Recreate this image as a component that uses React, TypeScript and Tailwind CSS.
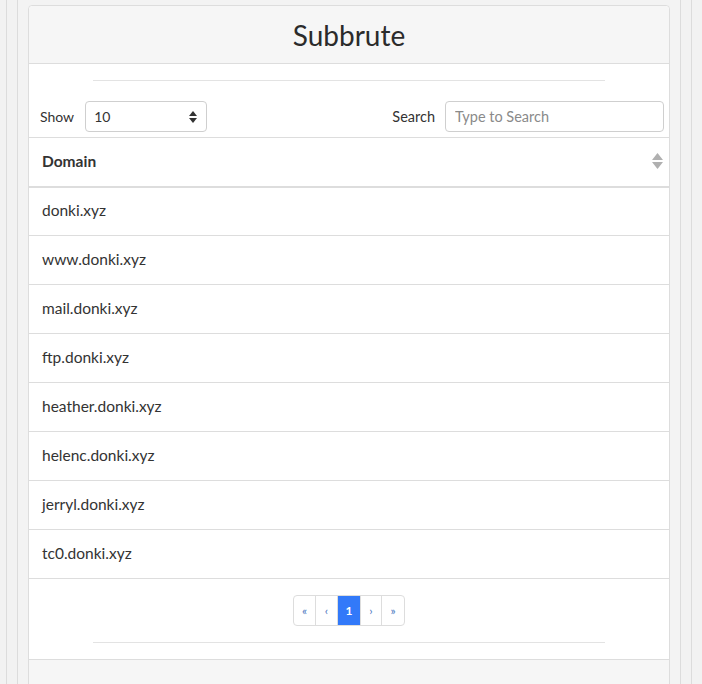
const domains = [
  "donki.xyz",
  "www.donki.xyz",
  "mail.donki.xyz",
  "ftp.donki.xyz",
  "heather.donki.xyz",
  "helenc.donki.xyz",
  "jerryl.donki.xyz",
  "tc0.donki.xyz",
];

function SortIcon() {
  return (
    <svg width="11" height="16" viewBox="0 0 11 16" className="text-[#b0b0b0]">
      <path d="M5.5 0 L11 7 L0 7 Z" fill="currentColor" />
      <path d="M0 9 L11 9 L5.5 16 Z" fill="currentColor" />
    </svg>
  );
}

export default function App() {
  return (
    <div
      className="min-h-[684px] bg-[#f2f2f2] pl-[6px] pr-[10px] text-[#333]"
      style={{ fontFamily: "Lato, 'Open Sans', sans-serif" }}
    >
      <div className="min-h-[684px] border-x border-[#dcdcdc] px-[10px]">
        <div className="min-h-[684px] border-x border-[#dcdcdc] bg-[#f3f3f3] px-[10px] pt-[5px]">
          {/* Panel */}
          <div className="rounded-t-[4px] border border-[#dddddd] bg-white">
            <div className="flex h-[58px] items-center justify-center rounded-t-[4px] border-b border-[#dddddd] bg-[#f6f6f6]">
              <h2 className="text-[28px] leading-none text-[#2b2b2b]">Subbrute</h2>
            </div>

            <div className="pt-[16px]">
              <hr className="mx-auto w-[512px] border-[#e3e3e3]" />

              <div className="mt-[20px] flex items-center justify-between pl-[11px] pr-[5px]">
                <div className="flex items-center gap-[11px]">
                  <span className="text-[14px]">Show</span>
                  <div className="flex h-[31px] w-[122px] items-center justify-between rounded-[4px] border border-[#cfcfcf] pl-[8px] pr-[9px] text-[14px]">
                    <span>10</span>
                    <svg width="8" height="12" viewBox="0 0 8 12">
                      <path d="M4 0 L8 5 L0 5 Z" fill="#333" />
                      <path d="M0 7 L8 7 L4 12 Z" fill="#333" />
                    </svg>
                  </div>
                </div>
                <div className="flex items-center gap-[10px]">
                  <span className="text-[14.5px]">Search</span>
                  <input
                    placeholder="Type to Search"
                    className="h-[31px] w-[219px] rounded-[4px] border border-[#cfcfcf] px-[9px] text-[14.5px] outline-none placeholder:text-[#8a8a8a]"
                  />
                </div>
              </div>

              <table className="mt-[5px] w-full border-collapse text-[15.5px]">
                <thead>
                  <tr className="border-y border-[#dddddd]">
                    <th className="h-[49px] border-b-2 border-[#dddddd] pb-[1px] pl-[13px] pr-[6px] text-left font-bold">
                      <div className="flex items-center justify-between">
                        <span>Domain</span>
                        <SortIcon />
                      </div>
                    </th>
                  </tr>
                </thead>
                <tbody>
                  {domains.map((d) => (
                    <tr key={d} className="border-b border-[#dddddd]">
                      <td className="h-[49px] pb-[1px] pl-[13px]">{d}</td>
                    </tr>
                  ))}
                </tbody>
              </table>

              <div className="flex justify-center pt-[16px]">
                <div className="flex h-[31px] overflow-hidden rounded-[4px] border border-[#dddddd] text-[12px] text-[#4a78c0]">
                  <span className="flex w-[22px] items-center justify-center border-r border-[#dddddd]">«</span>
                  <span className="flex w-[22px] items-center justify-center border-r border-[#dddddd]">‹</span>
                  <span className="flex w-[22px] items-center justify-center bg-[#3279f9] font-bold text-white">1</span>
                  <span className="flex w-[22px] items-center justify-center border-x border-[#dddddd]">›</span>
                  <span className="flex w-[22px] items-center justify-center">»</span>
                </div>
              </div>

              <hr className="mx-auto mt-[16px] w-[512px] border-[#e3e3e3]" />
              <div className="mt-[16px] h-[40px] border-t border-[#dddddd] bg-[#f6f6f6]" />
            </div>
          </div>
        </div>
      </div>
    </div>
  );
}
